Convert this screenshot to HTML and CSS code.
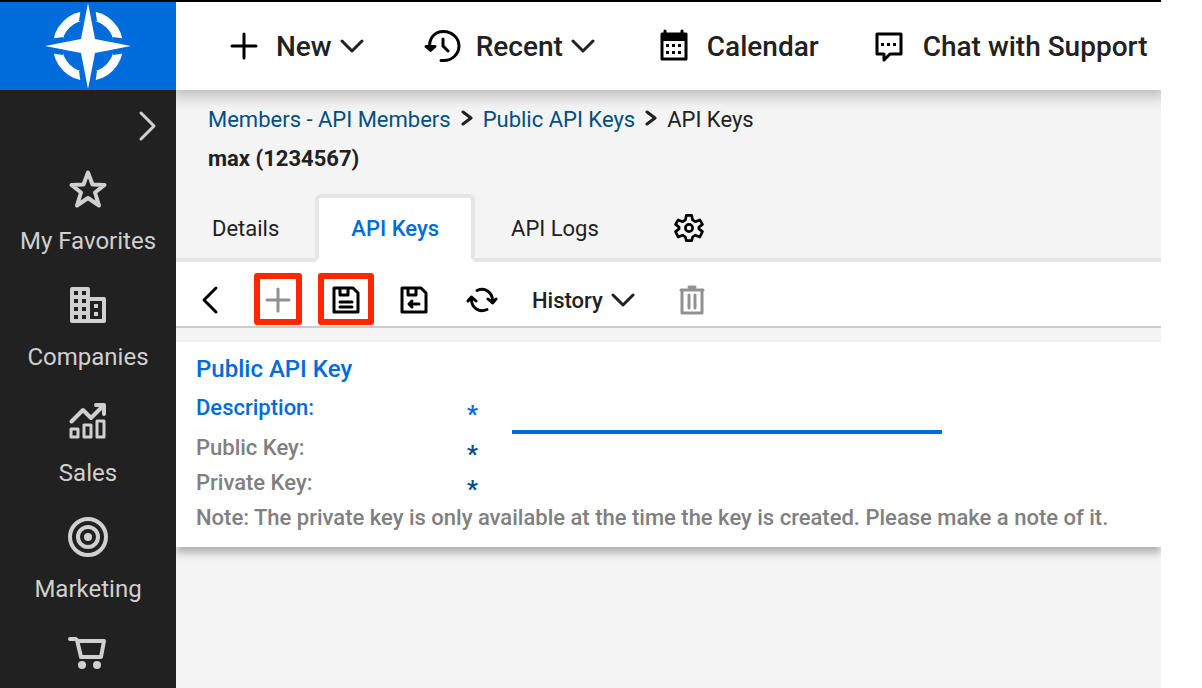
FILE: index.html
```html
<!DOCTYPE html>
<html lang="en">
<head>
    <meta charset="UTF-8">
    <meta name="viewport" content="width=device-width, initial-scale=1.0">
    <title>Public API Keys</title>
    <link rel="stylesheet" href="styles.css">
</head>
<body>
    <div class="app">
        <nav class="sidebar">
            <a class="logo" href="#" aria-label="Home">
                <svg width="88" height="88" viewBox="0 0 88 88">
                    <circle cx="44" cy="44" r="30.500" fill="none" stroke="#fff" stroke-width="9"/>
                    <path d="M37 5h14l2 14h-18zM35 69h18l-2 14h-14zM5 37v14l14 2v-18zM83 37v14l-14 2v-18z" fill="#006bdb" stroke="none"/>
                    <path d="M44 1 51 37 87 44 51 51 44 87 37 51 1 44 37 37z" fill="#fff" stroke="none"/>
                </svg>
            </a>
            <button class="expand" aria-label="Expand menu">
                <svg width="20" height="32" viewBox="0 0 20 32"><path d="M4 3 17 16 4 29" stroke-width="3"/></svg>
            </button>
            <a class="nav-item" href="#">
                <svg width="48" height="48" viewBox="0 0 48 48"><path d="M24 6.500 28.500 18.500 40.500 19 31 26.500 35 39.500 24 32 13 39.500 17 26.500 7.500 19 19.500 18.500z" stroke-width="4"/></svg>
                <span>My Favorites</span>
            </a>
            <a class="nav-item" href="#">
                <svg width="48" height="48" viewBox="0 0 48 48"><path class="solid" fill-rule="evenodd" d="M8 5h16q2 0 2 2v8h14q2 0 2 2v22q0 2-2 2H8q-2 0-2-2V7q0-2 2-2zM10 9v4h4V9zm8 0v4h4V9zm-8 8v4h4v-4zm8 0v4h4v-4zm-8 8v4h4v-4zm8 0v4h4v-4zm-8 8v4h4v-4zm8 0v4h4v-4zM26 19v18h12V19zm4 3h4v4h-4zm0 8h4v4h-4z"/></svg>
                <span>Companies</span>
            </a>
            <a class="nav-item" href="#">
                <svg width="48" height="48" viewBox="0 0 48 48"><path d="M7.500 23.500 19 12l8 8L39 8M32 7h8v9" stroke-width="4"/><path d="M7 31h7v8H7zm13-4h7v12h-7zm13-4h7v16h-7z" stroke-width="3"/></svg>
                <span>Sales</span>
            </a>
            <a class="nav-item" href="#">
                <svg width="48" height="48" viewBox="0 0 48 48"><circle cx="24" cy="23" r="18" stroke-width="4"/><circle cx="24" cy="23" r="10" stroke-width="4"/><circle class="solid" cx="24" cy="23" r="4"/></svg>
                <span>Marketing</span>
            </a>
            <a class="nav-item" href="#" aria-label="Procurement">
                <svg width="48" height="48" viewBox="0 0 48 48"><path d="M6 9h5q2 0 2.500 3L17 27h20l3-16H14" stroke-width="4"/><circle class="solid" cx="18" cy="35" r="4"/><circle class="solid" cx="33" cy="35" r="4"/></svg>
            </a>
        </nav>

        <div class="page">
            <header class="topbar">
                <button class="top-item">
                    <svg width="40" height="40" viewBox="0 0 40 40"><path d="M20 8v24M8 20h24" stroke-width="3"/></svg>
                    <span>New</span>
                    <svg class="caret" width="24" height="16" viewBox="0 0 24 16"><path d="M2 3 12 13 22 3" stroke-width="3"/></svg>
                </button>
                <button class="top-item">
                    <svg width="40" height="40" viewBox="0 0 40 40"><path d="M6 23C4 12 11 5.500 19.500 5.500 28 5.500 35 12 35 20s-7 14.500-15 14.500h-3M19 13v7l5 5" stroke-width="3"/><path d="M2 20.500 6.500 24.500 11 20.500z" fill="currentColor" stroke-width="3"/></svg>
                    <span>Recent</span>
                    <svg class="caret" width="24" height="16" viewBox="0 0 24 16"><path d="M2 3 12 13 22 3" stroke-width="3"/></svg>
                </button>
                <button class="top-item">
                    <svg width="40" height="40" viewBox="0 0 40 40"><path d="M7 8h24v25H7zM10 5v4M27 5v4" stroke-width="3"/><path class="solid" d="M6 7h26v8H6zM11 18h3v3h-3zm6 0h3v3h-3zm6 0h3v3h-3zM11 25h3v3h-3zm6 0h3v3h-3zm6 0h3v3h-3z"/></svg>
                    <span>Calendar</span>
                </button>
                <button class="top-item">
                    <svg width="40" height="40" viewBox="0 0 40 40"><path d="M6 8h24v20H19l-6 6v-6H6z" stroke-width="3"/><path class="solid" d="M10 17h3v3h-3zm6 0h3v3h-3zm6 0h3v3h-3z"/></svg>
                    <span>Chat with Support</span>
                </button>
            </header>

            <main>
                <nav class="breadcrumbs">
                    <a href="#">Members - API Members</a>
                    <svg width="12" height="20" viewBox="0 0 12 20"><path d="M2 2 10 8 2 14" stroke-width="3"/></svg>
                    <a href="#">Public API Keys</a>
                    <svg width="12" height="20" viewBox="0 0 12 20"><path d="M2 2 10 8 2 14" stroke-width="3"/></svg>
                    <span>API Keys</span>
                </nav>
                <h1>max (1234567)</h1>

                <div class="tabs">
                    <button class="tab">Details</button>
                    <button class="tab active">API Keys</button>
                    <button class="tab">API Logs</button>
                    <button class="tab" aria-label="Tab settings">
                        <svg width="36" height="36" viewBox="0 0 40 40"><path d="M17 6h6l1 5 3 2 5-2 3 5-4 3v2l4 3-3 6-5-2-3 2-1 4h-6l-1-4-3-2-5 2-3-6 4-3v-2l-4-3 3-5 5 2 3-2z" stroke-width="3"/><circle cx="20" cy="20" r="4" stroke-width="3"/></svg>
                    </button>
                </div>

                <div class="toolbar">
                    <button class="tool" aria-label="Back"><svg width="32" height="32" viewBox="0 0 32 32"><path d="M22 4 10 16l12 12" stroke-width="3"/></svg></button>
                    <button class="tool muted framed" aria-label="New"><svg width="32" height="32" viewBox="0 0 32 32"><path d="M16 5v22M5 16h22" stroke-width="3"/></svg></button>
                    <button class="tool framed wide" aria-label="Save"><svg width="32" height="32" viewBox="0 0 32 32"><path d="M4 4h19l5 5v19H4zM10 4v7h8V4M10 18h12M10 23h12" stroke-width="3"/></svg></button>
                    <button class="tool" aria-label="Save and close"><svg width="32" height="32" viewBox="0 0 32 32"><path d="M4 4h19l5 5v19H4zM10 4v7h8V4M12 20h9M14 17l-3 3 3 3" stroke-width="3"/></svg></button>
                    <button class="tool" aria-label="Refresh"><svg width="32" height="32" viewBox="0 0 32 32"><path d="M11 6.500C19 3 26 8 26.500 16M21 25.500C13 29 6 24 5.500 16M22 15l4.500 4 3.500-4M2 17l3.500-4 4.500 4" stroke-width="3"/></svg></button>
                    <button class="history">
                        History
                        <svg width="24" height="16" viewBox="0 0 24 16"><path d="M2 3 12 13 22 3" stroke-width="3"/></svg>
                    </button>
                    <button class="tool muted" aria-label="Delete"><svg width="32" height="32" viewBox="0 0 32 32"><path d="M6 6h22M14 3h6M7 6v23h20V6M14 11v13M20 11v13" stroke-width="3"/></svg></button>
                </div>

                <form class="panel">
                    <h2>Public API Key</h2>
                    <div class="row field">
                        <label for="description">Description:</label>
                        <span class="required">*</span>
                        <input id="description" type="text">
                    </div>
                    <div class="row">
                        <span>Public Key:</span>
                        <span class="required">*</span>
                    </div>
                    <div class="row">
                        <span>Private Key:</span>
                        <span class="required">*</span>
                    </div>
                    <p class="note">Note: The private key is only available at the time the key is created. Please make a note of it.</p>
                </form>
            </main>
        </div>
    </div>
</body>
</html>
```
FILE: styles.css
```css
* {
    box-sizing: border-box;
}
body {
    margin: 0;
    background: #fff;
    color: #212121;
    font-family: Roboto, Arial, sans-serif;
    font-size: 22px;
}
h1, h2, p {
    margin: 0;
}
a {
    color: #00507f;
    text-decoration: none;
}
button {
    padding: 0;
    border: none;
    background: none;
    color: inherit;
    font: inherit;
    cursor: pointer;
}
svg {
    flex: none;
    fill: none;
    stroke: currentColor;
    stroke-linejoin: round;
    stroke-linecap: round;
}
.solid {
    fill: currentColor;
    stroke: none;
}
.app {
    display: grid;
    grid-template-columns: 176px 1fr;
    height: 100vh;
    margin-right: 41px;
    border-top: 2px solid #000;
    overflow: hidden;
}

/* Sidebar */
.sidebar {
    position: relative;
    z-index: 2;
    display: flex;
    flex-direction: column;
    min-height: 0;
    background: #212121;
    color: #d0d0d0;
}
.logo {
    display: flex;
    flex: none;
    justify-content: center;
    height: 88px;
    background: #006bdb;
}
.expand {
    display: flex;
    flex: none;
    justify-content: flex-end;
    align-items: center;
    height: 72px;
    padding-right: 19px;
    margin-bottom: 4px;
}
.nav-item {
    display: flex;
    flex: none;
    flex-direction: column;
    align-items: center;
    gap: 13px;
    height: 116px;
    color: inherit;
    font-size: 24px;
    line-height: 28px;
}

/* Top bar */
.page {
    display: flex;
    flex-direction: column;
    min-width: 0;
    background: #f4f4f4;
}
.topbar {
    position: relative;
    z-index: 1;
    display: flex;
    flex: none;
    align-items: center;
    gap: 52px;
    height: 88px;
    padding-left: 48px;
    background: #fff;
    box-shadow: 0 0 14px 6px rgba(0, 0, 0, 0.24);
}
.top-item {
    display: flex;
    align-items: center;
    gap: 12px;
    font-size: 28px;
    font-weight: 500;
    white-space: nowrap;
}
.top-item svg {
    color: #000;
}
.top-item .caret {
    margin: 0 8px 0 -4px;
    color: #212121;
}

/* Record header */
.breadcrumbs {
    display: flex;
    align-items: center;
    gap: 10px;
    padding: 16px 32px 0;
    line-height: 28px;
}
h1 {
    padding: 10px 32px 20px;
    font-size: 22px;
    font-weight: 700;
    line-height: 30px;
}
.tabs {
    display: flex;
    height: 68px;
    border-bottom: 4px solid #e5e5e5;
}
.tab {
    display: flex;
    align-items: center;
    height: 68px;
    padding: 0 32px;
    border: 4px solid transparent;
}
.tab.active {
    border-color: #e5e5e5;
    border-bottom-color: #fff;
    border-radius: 6px 6px 0 0;
    background: #fff;
    color: #006bdb;
    font-weight: 500;
}
.tab svg {
    color: #000;
}

/* Toolbar */
.toolbar {
    display: flex;
    align-items: center;
    gap: 20px;
    padding: 14px 10px 2px;
    border-bottom: 2px solid #cacbca;
    background: #fff;
}
.tool {
    position: relative;
    display: flex;
    align-items: center;
    justify-content: center;
    width: 48px;
    height: 48px;
    color: #000;
}
.tool.muted {
    color: #919191;
}
.framed::after {
    content: "";
    position: absolute;
    inset: -3px 0 -1px;
    border: 6px solid #ff2600;
    border-radius: 3px;
}
.framed.wide::after {
    left: -4px;
    right: -4px;
}
.history {
    display: flex;
    align-items: center;
    gap: 8px;
    margin: 0 12px 0 6px;
    font-weight: 500;
}

/* Key form */
.panel {
    margin-top: 14px;
    padding: 10px 20px 15px;
    background: #fff;
    box-shadow: 0 6px 8px rgba(0, 0, 0, 0.28);
    color: #808080;
    font-weight: 500;
    line-height: 28px;
}
h2 {
    color: #006bdb;
    font-size: 24px;
    font-weight: 500;
    line-height: 34px;
}
.row {
    display: grid;
    grid-template-columns: 271px 45px 1fr;
    margin-bottom: 7px;
}
.row.field {
    margin: 0;
    color: #006bdb;
    line-height: 44px;
}
.required {
    height: 28px;
    padding-top: 6px;
    color: #00507f;
    font-size: 24px;
    font-weight: 700;
}
.field .required {
    color: #006bdb;
}
.field input {
    width: 100%;
    max-width: 430px;
    height: 48px;
    padding: 0;
    border: none;
    border-bottom: 4px solid #006bdb;
    outline: none;
    background: none;
    color: #212121;
    font: inherit;
}
```
